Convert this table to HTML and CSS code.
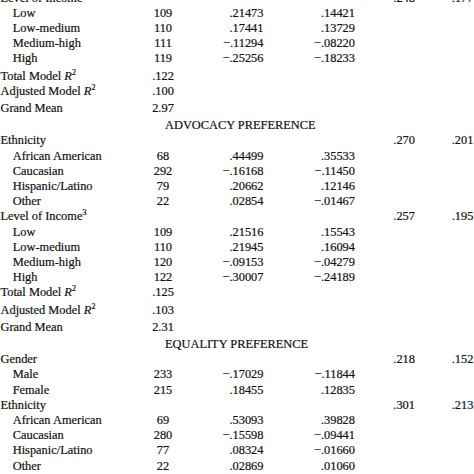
FILE: index.html
```html
<!DOCTYPE html>
<html lang="en">
<head>
<meta charset="utf-8">
<title>Table</title>
<link rel="stylesheet" href="styles.css">
</head>
<body>
<div class="table">
  <div class="row"><span class="lab">Level of Income</span><span class="n"></span><span class="c3"></span><span class="c4"></span><span class="c5">.248</span><span class="c6">.177</span></div>
  <div class="row"><span class="lab ind">Low</span><span class="n">109</span><span class="c3">.21473</span><span class="c4">.14421</span><span class="c5"></span><span class="c6"></span></div>
  <div class="row"><span class="lab ind">Low-medium</span><span class="n">110</span><span class="c3">.17441</span><span class="c4">.13729</span><span class="c5"></span><span class="c6"></span></div>
  <div class="row"><span class="lab ind">Medium-high</span><span class="n">111</span><span class="c3">&minus;.11294</span><span class="c4">&minus;.08220</span><span class="c5"></span><span class="c6"></span></div>
  <div class="row"><span class="lab ind">High</span><span class="n">119</span><span class="c3">&minus;.25256</span><span class="c4">&minus;.18233</span><span class="c5"></span><span class="c6"></span></div>
  <div class="row gap-a"><span class="lab">Total Model <i>R</i><sup>2</sup></span><span class="n">.122</span></div>
  <div class="row"><span class="lab">Adjusted Model <i>R</i><sup>2</sup></span><span class="n">.100</span></div>
  <div class="row gap-b"><span class="lab">Grand Mean</span><span class="n">2.97</span></div>
  <div class="row head gap-c"><span class="title">ADVOCACY PREFERENCE</span></div>
  <div class="row"><span class="lab">Ethnicity</span><span class="n"></span><span class="c3"></span><span class="c4"></span><span class="c5">.270</span><span class="c6">.201</span></div>
  <div class="row"><span class="lab ind">African American</span><span class="n">68</span><span class="c3">.44499</span><span class="c4">.35533</span></div>
  <div class="row"><span class="lab ind">Caucasian</span><span class="n">292</span><span class="c3">&minus;.16168</span><span class="c4">&minus;.11450</span></div>
  <div class="row"><span class="lab ind">Hispanic/Latino</span><span class="n">79</span><span class="c3">.20662</span><span class="c4">.12146</span></div>
  <div class="row"><span class="lab ind">Other</span><span class="n">22</span><span class="c3">.02854</span><span class="c4">&minus;.01467</span></div>
  <div class="row"><span class="lab">Level of Income<sup>3</sup></span><span class="n"></span><span class="c3"></span><span class="c4"></span><span class="c5">.257</span><span class="c6">.195</span></div>
  <div class="row"><span class="lab ind">Low</span><span class="n">109</span><span class="c3">.21516</span><span class="c4">.15543</span></div>
  <div class="row"><span class="lab ind">Low-medium</span><span class="n">110</span><span class="c3">.21945</span><span class="c4">.16094</span></div>
  <div class="row"><span class="lab ind">Medium-high</span><span class="n">120</span><span class="c3">&minus;.09153</span><span class="c4">&minus;.04279</span></div>
  <div class="row"><span class="lab ind">High</span><span class="n">122</span><span class="c3">&minus;.30007</span><span class="c4">&minus;.24189</span></div>
  <div class="row"><span class="lab">Total Model <i>R</i><sup>2</sup></span><span class="n">.125</span></div>
  <div class="row gap-d"><span class="lab">Adjusted Model <i>R</i><sup>2</sup></span><span class="n">.103</span></div>
  <div class="row gap-e"><span class="lab">Grand Mean</span><span class="n">2.31</span></div>
  <div class="row head gap-f"><span class="title">EQUALITY PREFERENCE</span></div>
  <div class="row"><span class="lab">Gender</span><span class="n"></span><span class="c3"></span><span class="c4"></span><span class="c5">.218</span><span class="c6">.152</span></div>
  <div class="row"><span class="lab ind">Male</span><span class="n">233</span><span class="c3">&minus;.17029</span><span class="c4">&minus;.11844</span></div>
  <div class="row"><span class="lab ind">Female</span><span class="n">215</span><span class="c3">.18455</span><span class="c4">.12835</span></div>
  <div class="row"><span class="lab">Ethnicity</span><span class="n"></span><span class="c3"></span><span class="c4"></span><span class="c5">.301</span><span class="c6">.213</span></div>
  <div class="row"><span class="lab ind">African American</span><span class="n">69</span><span class="c3">.53093</span><span class="c4">.39828</span></div>
  <div class="row"><span class="lab ind">Caucasian</span><span class="n">280</span><span class="c3">&minus;.15598</span><span class="c4">&minus;.09441</span></div>
  <div class="row"><span class="lab ind">Hispanic/Latino</span><span class="n">77</span><span class="c3">.08324</span><span class="c4">&minus;.01660</span></div>
  <div class="row"><span class="lab ind">Other</span><span class="n">22</span><span class="c3">.02869</span><span class="c4">.01060</span></div>
</div>
</body>
</html>
```
FILE: styles.css
```css
html, body {
  margin: 0;
  padding: 0;
  background: #ffffff;
  overflow: hidden;
}
body {
  width: 474px;
  height: 474px;
  font-family: "Liberation Serif", "Times New Roman", serif;
  font-size: 12.4px;
  color: #111111;
  -webkit-text-stroke: 0.2px #111111;
}
.table {
  margin-top: -9.3px;
  display: flex;
  flex-direction: column;
}
.row {
  display: grid;
  grid-template-columns: 140px 46px 77.5px 91.5px 60px 1fr;
  height: 15.2px;
  line-height: 15.2px;
  white-space: nowrap;
}
.lab {
  padding-left: 0.5px;
}
.lab.ind {
  padding-left: 12.7px;
}
.n {
  text-align: center;
}
.c3, .c4, .c5 {
  text-align: right;
}
.c6 {
  padding-left: 36.7px;
}
.head {
  display: block;
}
.title {
  display: block;
  padding-left: 165px;
}
sup {
  font-size: 8px;
  line-height: 0;
  vertical-align: 5px;
}
i {
  font-style: italic;
}
.gap-a { margin-top: 2.2px; }
.gap-b { margin-top: 2.1px; }
.gap-c { margin-top: 1.8px; }
.gap-d { margin-top: 2.3px; }
.gap-e { margin-top: 2.4px; }
.gap-f { margin-top: 1.5px; }
```
